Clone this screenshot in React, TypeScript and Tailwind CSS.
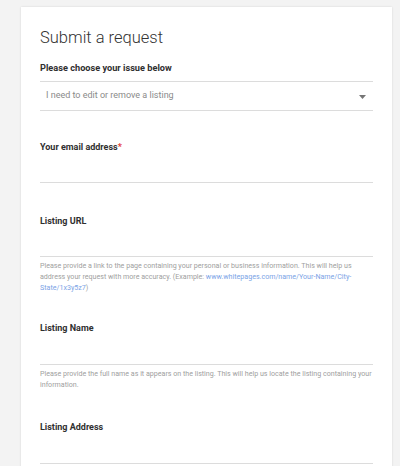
import React from 'react';

function Field({
  label,
  required,
  help,
  className,
  inputClass,
}: {
  label: string;
  required?: boolean;
  help?: React.ReactNode;
  className: string;
  inputClass: string;
}) {
  return (
    <div className={className}>
      <label className="block text-[9px] leading-[14px] font-bold text-[#2f2f2f]">
        {label}
        {required && <span className="text-[#e53935]">*</span>}
      </label>
      <div className={`${inputClass} border-b border-[#dcdcdc]`} />
      {help && (
        <p className="mt-[3px] text-[7.1px] leading-[11px] text-[#a0a0a0]">{help}</p>
      )}
    </div>
  );
}

export default function App() {
  return (
    <div className="min-h-[466px] bg-[#f3f3f3] pt-[7px] font-['Roboto',sans-serif] overflow-hidden">
      <div className="ml-[21px] w-[371px] min-h-[470px] bg-white px-[19px] pt-[21px] shadow-[0_0_2px_rgba(0,0,0,0.12)]">
        {/* Title */}
        <h1 className="text-[16.5px] leading-[20px] font-light text-[#333]">Submit a request</h1>

        {/* Issue select */}
        <div className="mt-[13px]">
          <label className="block text-[9.2px] leading-[14px] font-bold text-[#2f2f2f]">
            Please choose your issue below
          </label>
          <div className="mt-[6px] h-[30px] border-y border-[#dcdcdc] flex items-center justify-between pl-[6px] pr-[7px]">
            <span className="text-[9px] text-[#8a8a8a]">I need to edit or remove a listing</span>
            <svg width="7" height="4" viewBox="0 0 7 4" className="mt-[1px]">
              <path d="M0 0h7L3.5 4z" fill="#757575" />
            </svg>
          </div>
        </div>

        <Field label="Your email address" required className="mt-[29px]" inputClass="h-[29px]" />

        <Field
          label="Listing URL"
          className="mt-[31px]"
          inputClass="h-[29px]"
          help={
            <>
              Please provide a link to the page containing your personal or business information. This will help us
              address your request with more accuracy. (Example:{' '}
              <span className="text-[#7ba3e6]">www.whitepages.com/name/Your-Name/City-State/1x3y5z7</span>)
            </>
          }
        />

        <Field
          label="Listing Name"
          className="mt-[28px]"
          inputClass="h-[30px]"
          help="Please provide the full name as it appears on the listing. This will help us locate the listing containing your information."
        />

        <Field label="Listing Address" className="mt-[30px]" inputClass="h-[30px]" />
      </div>
    </div>
  );
}
